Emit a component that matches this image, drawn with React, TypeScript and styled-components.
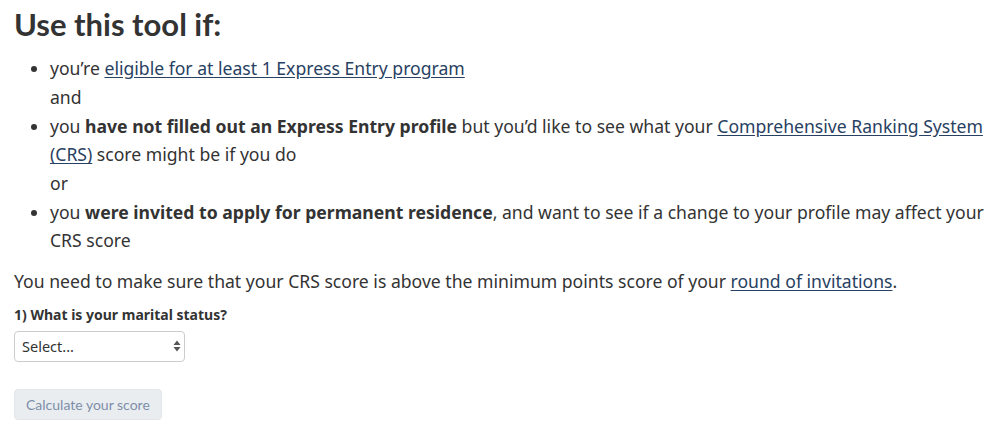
import React from "react";
import styled, { createGlobalStyle } from "styled-components";

const GlobalStyle = createGlobalStyle`
    html, body {
        margin: 0;
        padding: 0;
        background: #fff;
    }
    body {
        font-family: "Noto Sans", "DejaVu Sans", sans-serif;
        color: #333;
    }
`;

const Page = styled.main`
    padding: 0 14px;
`;

const Heading = styled.h2`
    font-family: Lato, "Noto Sans", sans-serif;
    font-weight: 700;
    font-size: 31px;
    line-height: 1.2;
    color: #333;
    margin: 6px 0 11px;
`;

const List = styled.ul`
    margin: 0 0 12px;
    padding-left: 36px;
    font-size: 17.6px;
    line-height: 28.7px;
`;

const Item = styled.li`
    margin: 0;
`;

const Joiner = styled.div`
    line-height: 28.7px;
`;

const Anchor = styled.a`
    color: #284162;
    text-decoration: underline;
    text-underline-offset: 2px;
`;

const Para = styled.p`
    font-size: 17.6px;
    line-height: 28.7px;
    margin: 0 0 9px;
`;

const Label = styled.label`
    display: block;
    font-size: 14px;
    font-weight: 700;
    line-height: 20px;
    margin-bottom: 6px;
`;

const SelectWrap = styled.div`
    position: relative;
    width: 171px;
    margin-bottom: 27px;
`;

const Select = styled.select`
    display: block;
    appearance: none;
    width: 100%;
    height: 31px;
    padding: 0 24px 0 7px;
    border: 1px solid #ccc;
    border-radius: 4px;
    background: #fff;
    font-family: "Noto Sans", sans-serif;
    font-size: 14.5px;
    color: #333;
`;

const Arrows = styled.svg`
    position: absolute;
    right: 4px;
    top: 9px;
    pointer-events: none;
`;

const Button = styled.button`
    display: block;
    font-family: Lato, "Noto Sans", sans-serif;
    font-size: 14px;
    color: #7d8ea9;
    background: #eaedf0;
    border: 1px solid #e3e6ea;
    border-radius: 4px;
    height: 31px;
    padding: 0 11px;
    cursor: not-allowed;
`;

export default function App() {
    return (
        <>
            <GlobalStyle />
            <Page>
                <Heading>Use this tool if:</Heading>
                <List>
                    <Item>
                        you’re <Anchor href="#">eligible for at least 1 Express Entry program</Anchor>
                        <Joiner>and</Joiner>
                    </Item>
                    <Item>
                        you <strong>have not filled out an Express Entry profile</strong> but you’d like to see what your{" "}
                        <Anchor href="#">Comprehensive Ranking System (CRS)</Anchor> score might be if you do
                        <Joiner>or</Joiner>
                    </Item>
                    <Item>
                        you <strong>were invited to apply for permanent residence</strong>, and want to see if a change to your profile may affect your CRS score
                    </Item>
                </List>
                <Para>
                    You need to make sure that your CRS score is above the minimum points score of your{" "}
                    <Anchor href="#">round of invitations</Anchor>.
                </Para>
                <Label htmlFor="marital">1) What is your marital status?</Label>
                <SelectWrap>
                    <Select id="marital" defaultValue="">
                        <option value="">Select...</option>
                    </Select>
                    <Arrows width="8" height="12" viewBox="0 0 8 12">
                        <path d="M4 0.5 L7.5 5 H0.5 Z M4 11.5 L7.5 7 H0.5 Z" fill="#555" />
                    </Arrows>
                </SelectWrap>
                <Button type="button" disabled>Calculate your score</Button>
            </Page>
        </>
    );
}
